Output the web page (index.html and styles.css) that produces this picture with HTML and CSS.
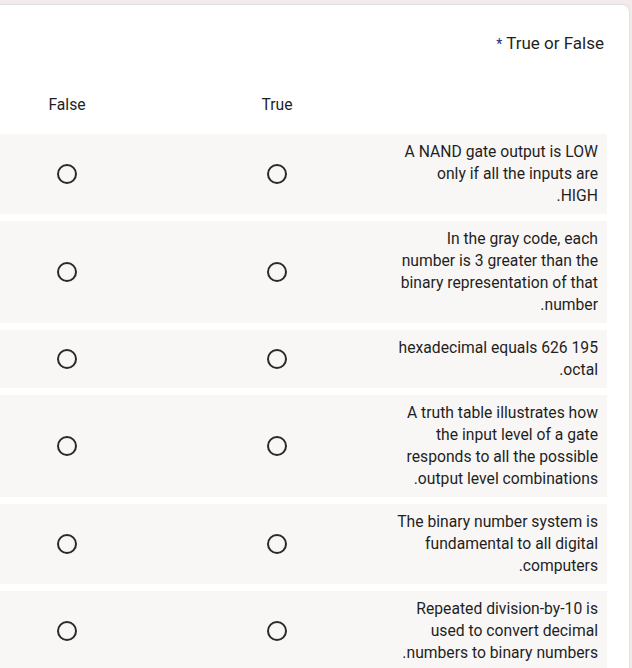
FILE: index.html
```html
<!DOCTYPE html>
<html lang="en">
<head>
<meta charset="utf-8">
<title>True or False</title>
<link rel="stylesheet" href="styles.css">
</head>
<body>
<div class="card">
  <div class="title"><span class="req">*</span> True or False</div>
  <div class="grid">
    <div class="row head">
      <div class="opt opt-false">False</div>
      <div class="opt opt-true">True</div>
      <div class="label"></div>
    </div>
    <div class="row item">
      <div class="opt opt-false"><span class="radio"></span></div>
      <div class="opt opt-true"><span class="radio"></span></div>
      <div class="label"><div>A NAND gate output is LOW</div><div>only if all the inputs are</div><div>.HIGH</div></div>
    </div>
    <div class="row item">
      <div class="opt opt-false"><span class="radio"></span></div>
      <div class="opt opt-true"><span class="radio"></span></div>
      <div class="label"><div>In the gray code, each</div><div>number is 3 greater than the</div><div>binary representation of that</div><div>.number</div></div>
    </div>
    <div class="row item">
      <div class="opt opt-false"><span class="radio"></span></div>
      <div class="opt opt-true"><span class="radio"></span></div>
      <div class="label"><div>hexadecimal equals 626 195</div><div>.octal</div></div>
    </div>
    <div class="row item">
      <div class="opt opt-false"><span class="radio"></span></div>
      <div class="opt opt-true"><span class="radio"></span></div>
      <div class="label"><div>A truth table illustrates how</div><div>the input level of a gate</div><div>responds to all the possible</div><div>.output level combinations</div></div>
    </div>
    <div class="row item">
      <div class="opt opt-false"><span class="radio"></span></div>
      <div class="opt opt-true"><span class="radio"></span></div>
      <div class="label"><div>The binary number system is</div><div>fundamental to all digital</div><div>.computers</div></div>
    </div>
    <div class="row item">
      <div class="opt opt-false"><span class="radio"></span></div>
      <div class="opt opt-true"><span class="radio"></span></div>
      <div class="label"><div>Repeated division-by-10 is</div><div>used to convert decimal</div><div>.numbers to binary numbers</div></div>
    </div>
  </div>
</div>
</body>
</html>
```

FILE: styles.css
```css
html, body {
  margin: 0;
  padding: 0;
}
body {
  background: #f3eaec;
  font-family: Roboto, "Liberation Sans", Arial, sans-serif;
  color: #1f1f1f;
  overflow: hidden;
  height: 668px;
}
.card {
  margin-top: 4px;
  margin-right: 2px;
  background: #ffffff;
  border-top: 1px solid #e3dfe0;
  border-right: 1px solid #e6e1e2;
  border-radius: 0 8px 0 0;
  padding-top: 26px;
  min-height: 700px;
}
.title {
  text-align: right;
  font-size: 17px;
  line-height: 24px;
  padding-right: 25px;
}
.req {
  color: #1c2a8c;
  font-size: 14px;
}
.grid {
  width: 607px;
  display: flex;
  flex-direction: column;
  gap: 7px;
  margin-top: 38px;
}
.row {
  display: flex;
  align-items: center;
}
.row.head {
  font-size: 15.7px;
  line-height: 22px;
  margin-bottom: 11px;
}
.row.item {
  background: #f9f7f6;
  padding: 7px 0;
}
.opt {
  display: flex;
  justify-content: center;
  flex: none;
}
.opt-false {
  width: 134px;
}
.opt-true {
  width: 122px;
  margin-left: 82px;
}
.label {
  flex: 1;
  text-align: right;
  font-size: 15.7px;
  line-height: 22px;
  padding-right: 9px;
  white-space: nowrap;
}
.radio {
  width: 20px;
  height: 20px;
  box-sizing: border-box;
  border: 2px solid #2a2a2a;
  border-radius: 50%;
  display: block;
}
```
